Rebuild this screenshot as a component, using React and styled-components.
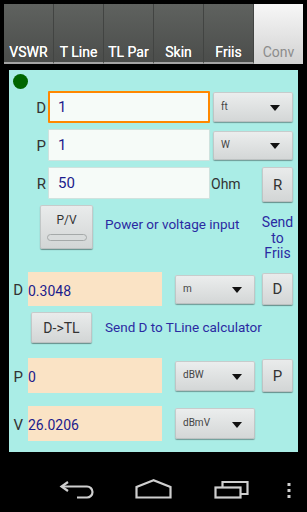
import React from "react";
import styled, { createGlobalStyle } from "styled-components";

const GlobalStyle = createGlobalStyle`
  html, body { margin: 0; padding: 0; background: #000; }
  body {
    width: 307px; height: 512px; overflow: hidden;
    font-family: Roboto, "Noto Sans", "Liberation Sans", sans-serif;
  }
  * { box-sizing: border-box; }
`;

const Screen = styled.div`
  display: flex;
  flex-direction: column;
  width: 307px;
  height: 512px;
  background: #000;
`;

const TabBar = styled.div`
  display: flex;
  margin: 4px 4px 0 4px;
  height: 60px;
  flex-shrink: 0;
`;

const Tab = styled.div`
  flex: 1;
  display: flex;
  align-items: flex-end;
  justify-content: center;
  font-size: 14px;
  line-height: 16px;
  font-weight: 400;
  ${(p) =>
    p.$active
      ? `
    background: linear-gradient(#f7f7f7, #d2d2d2);
    color: #8c8c8c;
    padding-bottom: 4px;
  `
      : `
    background: linear-gradient(#5f625f, #4b4d4b);
    color: #ffffff;
    text-shadow: 0 0 0.6px #ffffff;
    padding-bottom: 2px;
    border-bottom: 2px solid #a4a4a4;
    border-right: 1px solid #424442;
  `}
`;

const Panel = styled.div`
  display: flex;
  flex-direction: column;
  margin: 6px 0 0 9px;
  width: 289px;
  height: 382px;
  background: #aaede6;
  flex-shrink: 0;
`;

const Dot = styled.div`
  width: 15px;
  height: 15px;
  border-radius: 50%;
  background: #006600;
  margin: 4px 0 0 4px;
  flex-shrink: 0;
`;

const Row = styled.div`
  display: flex;
  align-items: ${(p) => p.$align || "center"};
  height: ${(p) => p.$h}px;
  margin-top: ${(p) => p.$mt}px;
  padding-right: 5px;
  flex-shrink: 0;
`;

const Label = styled.div`
  width: ${(p) => p.$w}px;
  padding-right: ${(p) => p.$pr}px;
  padding-top: 2px;
  margin-top: ${(p) => p.$mt || 0}px;
  align-self: center;
  text-align: right;
  font-size: 15px;
  color: #333;
  flex-shrink: 0;
`;

const TextInput = styled.input`
  width: 162px;
  height: 32px;
  margin: 0;
  border: ${(p) => (p.$focused ? "2px solid #ff8800" : "1px solid #cfe2de")};
  padding: 0 0 0 ${(p) => (p.$focused ? 8 : 9)}px;
  background: #f6fbf8;
  color: #1c1c8c;
  font-family: Roboto, "Noto Sans", sans-serif;
  font-size: 15px;
  outline: none;
  border-radius: 1px;
  flex-shrink: 0;
`;

const OutField = styled.div`
  width: 134px;
  height: ${(p) => p.$h}px;
  background: #fae3c5;
  color: #1c1c8c;
  font-size: 14px;
  display: flex;
  align-items: center;
  padding: 3px 0 0 0;
  flex-shrink: 0;
`;

const Spinner = styled.div`
  width: 80px;
  height: ${(p) => p.$h}px;
  margin-left: ${(p) => p.$ml}px;
  display: flex;
  align-items: center;
  justify-content: space-between;
  padding: 0 13px 2px 8px;
  background: linear-gradient(#eceeee, #d3d6d6);
  border-radius: 2px;
  box-shadow: 0 1px 1px rgba(0, 0, 0, 0.35), inset 0 0 0 1px rgba(170, 176, 176, 0.55);
  font-size: 10px;
  color: #444;
  flex-shrink: 0;
`;

const Caret = styled.div`
  width: 0;
  height: 0;
  border-left: 5px solid transparent;
  border-right: 5px solid transparent;
  border-top: 6px solid #111;
  margin-top: 4px;
`;

const Button = styled.div`
  width: ${(p) => p.$w}px;
  height: ${(p) => p.$h}px;
  margin-left: ${(p) => (p.$auto ? "auto" : `${p.$ml || 0}px`)};
  display: flex;
  align-items: center;
  justify-content: center;
  background: linear-gradient(#eaecec, #d2d5d5);
  border-radius: 2px;
  box-shadow: 0 1px 1px rgba(0, 0, 0, 0.4), inset 0 0 0 1px rgba(170, 176, 176, 0.55);
  color: #333;
  font-size: ${(p) => p.$fs || 15}px;
  flex-shrink: 0;
`;

const Toggle = styled.div`
  width: 53px;
  height: 44px;
  margin-left: 31px;
  display: flex;
  flex-direction: column;
  align-items: center;
  padding-top: 8px;
  background: linear-gradient(#eaecec, #d2d5d5);
  border-radius: 2px;
  box-shadow: 0 1px 1px rgba(0, 0, 0, 0.4), inset 0 0 0 1px rgba(170, 176, 176, 0.55);
  color: #333;
  font-size: 12px;
  line-height: 14px;
  flex-shrink: 0;
`;

const Indicator = styled.div`
  width: 40px;
  height: 7px;
  margin-top: 7px;
  border-radius: 4px;
  background: #d9dcdc;
  border: 1px solid #a5a9a9;
`;

const UnitText = styled.div`
  margin-left: 1px;
  margin-top: -1px;
  align-self: center;
  font-size: 14px;
  color: #333;
`;

const Info = styled.div`
  margin-left: ${(p) => p.$ml}px;
  margin-top: ${(p) => p.$mt || 0}px;
  font-size: 13.5px;
  line-height: 17px;
  color: #2a2aa2;
  white-space: nowrap;
`;

const SendText = styled.div`
  margin-left: auto;
  margin-right: -2px;
  margin-top: 10px;
  width: 35px;
  text-align: center;
  font-size: 14px;
  line-height: 15.5px;
  color: #2a2aa2;
  white-space: nowrap;
`;

const NavBar = styled.div`
  margin-top: auto;
  height: 48px;
  display: flex;
  align-items: flex-start;
  flex-shrink: 0;
`;

const NavIcon = styled.svg`
  margin-left: ${(p) => p.$ml}px;
  margin-top: ${(p) => p.$mt}px;
  flex-shrink: 0;
  overflow: visible;
`;

const tabs = ["VSWR", "T Line", "TL Par", "Skin", "Friis", "Conv"];

export default function App() {
  return (
    <>
      <GlobalStyle />
      <Screen>
        <TabBar>
          {tabs.map((t) => (
            <Tab key={t} $active={t === "Conv"}>
              {t}
            </Tab>
          ))}
        </TabBar>

        <Panel>
          <Dot />

          <Row $h={32} $mt={2}>
            <Label $w={39} $pr={2}>D</Label>
            <TextInput $focused defaultValue="1" />
            <Spinner $h={30} $ml={3}>
              <span>ft</span>
              <Caret />
            </Spinner>
          </Row>

          <Row $h={32} $mt={6}>
            <Label $w={39} $pr={2}>P</Label>
            <TextInput defaultValue="1" />
            <Spinner $h={29} $ml={3}>
              <span>W</span>
              <Caret />
            </Spinner>
          </Row>

          <Row $h={35} $mt={6} $align="flex-start">
            <Label $w={39} $pr={2} $mt={-3}>R</Label>
            <TextInput defaultValue="50" />
            <UnitText>Ohm</UnitText>
            <Button $w={31} $h={35} $auto>R</Button>
          </Row>

          <Row $h={57} $mt={3} $align="flex-start">
            <Toggle>
              <span>P/V</span>
              <Indicator />
            </Toggle>
            <Info $ml={12} $mt={11}>Power or voltage input</Info>
            <SendText>
              Send
              <br />
              to
              <br />
              Friis
            </SendText>
          </Row>

          <Row $h={34} $mt={10}>
            <Label $w={19} $pr={5}>D</Label>
            <OutField $h={34}>0.3048</OutField>
            <Spinner $h={29} $ml={13}>
              <span>m</span>
              <Caret />
            </Spinner>
            <Button $w={31} $h={32} $ml={7}>D</Button>
          </Row>

          <Row $h={31} $mt={6}>
            <Button $w={61} $h={31} $ml={22} $fs={14}>D-&gt;TL</Button>
            <Info $ml={13}>Send D to TLine calculator</Info>
          </Row>

          <Row $h={35} $mt={15}>
            <Label $w={19} $pr={5}>P</Label>
            <OutField $h={35}>0</OutField>
            <Spinner $h={30} $ml={13}>
              <span>dBW</span>
              <Caret />
            </Spinner>
            <Button $w={31} $h={33} $ml={7}>P</Button>
          </Row>

          <Row $h={35} $mt={13}>
            <Label $w={19} $pr={5}>V</Label>
            <OutField $h={35}>26.0206</OutField>
            <Spinner $h={31} $ml={13}>
              <span>dBmV</span>
              <Caret />
            </Spinner>
          </Row>
        </Panel>

        <NavBar>
          <NavIcon $ml={60} $mt={17} width="34" height="18" viewBox="0 0 34 18"
            fill="none" stroke="#cfcfcf" strokeWidth="2.2" strokeLinejoin="miter">
            <path d="M8 1 L1.5 5.5 L8 10" />
            <path d="M2 5.5 H27 A5.5 5.5 0 0 1 27 16.5 H17" />
          </NavIcon>
          <NavIcon $ml={41} $mt={15} width="37" height="20" viewBox="0 0 37 20"
            fill="none" stroke="#cfcfcf" strokeWidth="2.2">
            <path d="M18.5 1.2 L1.5 8 V18.5 H35.5 V8 Z" />
          </NavIcon>
          <NavIcon $ml={42} $mt={16} width="36" height="19" viewBox="0 0 36 19"
            fill="none" stroke="#cfcfcf" strokeWidth="2.2">
            <rect x="1.5" y="7.5" width="25" height="10" />
            <path d="M8.5 7.5 V2 H33.5 V14 H26.5" />
          </NavIcon>
          <NavIcon $ml={37} $mt={19} width="4" height="16" viewBox="0 0 4 16" fill="#cfcfcf">
            <rect x="0.5" y="0" width="3" height="3" />
            <rect x="0.5" y="6" width="3" height="3" />
            <rect x="0.5" y="12" width="3" height="3" />
          </NavIcon>
        </NavBar>
      </Screen>
    </>
  );
}
